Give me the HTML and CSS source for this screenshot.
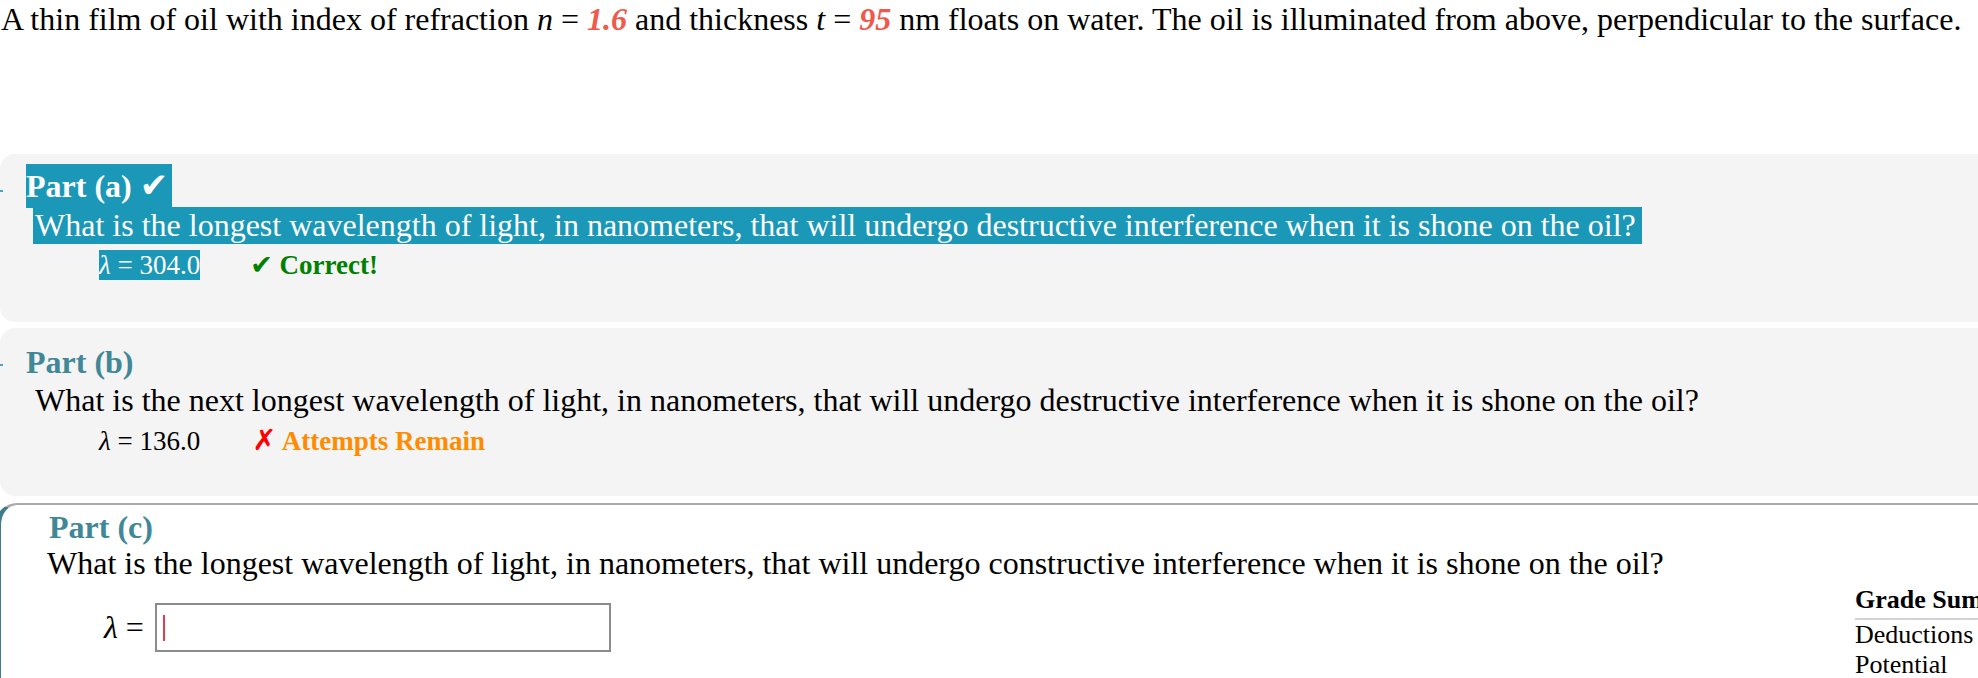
FILE: index.html
```html
<!DOCTYPE html>
<html lang="en">
<head>
<meta charset="utf-8">
<title>Thin film interference</title>
<link rel="stylesheet" href="styles.css">
</head>
<body>
<p class="intro">A thin film of oil with index of refraction <i class="var">n</i> = <i class="given">1.6</i> and thickness <i class="var">t</i> = <i class="given">95</i> nm floats on water. The oil is illuminated from above, perpendicular to the surface.</p>
<div class="parts">
  <section class="part part-done">
    <div class="part-title"><span class="sel sel-title">Part (a) <span class="check check-big">✔</span></span></div>
    <div class="question"><span class="sel sel-q">What is the longest wavelength of light, in nanometers, that will undergo destructive interference when it is shone on the oil?</span></div>
    <div class="answer"><span class="sel sel-ans"><i class="lambda">λ</i> = 304.0</span><span class="status status-ok"><span class="check">✔</span> Correct!</span></div>
  </section>
  <section class="part part-pending">
    <div class="part-title">Part (b)</div>
    <div class="question">What is the next longest wavelength of light, in nanometers, that will undergo destructive interference when it is shone on the oil?</div>
    <div class="answer"><span class="ans"><i class="lambda">λ</i> = 136.0</span><span class="status status-miss"><span class="cross">✗</span> Attempts Remain</span></div>
  </section>
  <section class="part part-active">
    <div class="part-title">Part (c)</div>
    <div class="question">What is the longest wavelength of light, in nanometers, that will undergo constructive interference when it is shone on the oil?</div>
    <div class="work-row">
      <div class="entry">
        <span class="entry-label"><i class="lambda">λ</i> =</span>
        <div class="entry-box" role="textbox" aria-label="lambda"><span class="caret"></span></div>
      </div>
      <aside class="grade">
        <div class="grade-head">Grade Summary</div>
        <div class="grade-line">Deductions</div>
        <div class="grade-line">Potential</div>
      </aside>
    </div>
  </section>
</div>
</body>
</html>
```
FILE: styles.css
```css
html, body {
  margin: 0;
  overflow: hidden;
}

body {
  width: 2105px;
  font-family: "Liberation Serif", "Times New Roman", serif;
  color: #000;
  background: #fff;
}

.intro {
  margin: 0 0 116px 1px;
  font-size: 32px;
  line-height: 38px;
  white-space: nowrap;
}

.var {
  font-style: italic;
}

.given {
  font-style: italic;
  font-weight: bold;
  color: #f0594a;
}

.parts {
  display: flex;
  flex-direction: column;
}

.part {
  position: relative;
  box-sizing: border-box;
  height: 168px;
  padding-top: 10px;
  background: #f4f4f4;
  border-radius: 15px 0 0 15px;
}

.part-done {
  margin-bottom: 6px;
}

.part-pending {
  margin-bottom: 7px;
}

.part-done::before,
.part-pending::before {
  content: "";
  position: absolute;
  left: 0;
  top: 36px;
  width: 3px;
  height: 2px;
  background: #4aa3c9;
}

.part-title {
  font-size: 32px;
  font-weight: bold;
  line-height: 43px;
  height: 43px;
  padding-left: 26px;
  color: #408797;
  white-space: nowrap;
}

.sel {
  display: inline-block;
  background: #1b97b8;
  color: #fff;
}

.sel-title {
  padding-right: 4px;
}

.check {
  font-family: "DejaVu Sans", sans-serif;
  font-weight: bold;
}

.check-big {
  font-size: 34px;
}

.cross {
  font-family: "DejaVu Sans", sans-serif;
  font-weight: bold;
  font-size: 29px;
  color: #f00;
}

.question {
  font-size: 32px;
  line-height: 37px;
  padding-left: 35px;
  white-space: nowrap;
}

.sel-q {
  margin-left: -2px;
  padding-left: 2px;
  padding-right: 6px;
}

.part-pending .part-title {
  margin-top: 3px;
}

.part-pending .question {
  margin-top: -2px;
}

.answer {
  display: flex;
  align-items: baseline;
  margin-top: 6px;
  padding-left: 99px;
  font-size: 27px;
  line-height: 30px;
  height: 30px;
  white-space: nowrap;
}

.lambda {
  font-style: italic;
}

.status {
  margin-left: 50px;
  font-weight: bold;
}

.status-ok {
  color: #008000;
}

.status-miss {
  margin-left: 52px;
  color: #ff8c00;
}

.part-active {
  height: auto;
  min-height: 200px;
  margin-left: -5px;
  padding-top: 4px;
  background: #fff;
  border-top: 2px solid #aaaaaa;
  border-left: 6px solid #3d7d89;
  border-radius: 22px 0 0 0;
}

.part-active .part-title {
  height: 37px;
  line-height: 37px;
  padding-left: 48px;
}

.part-active .question {
  line-height: 34px;
  padding-left: 46px;
}

.work-row {
  display: flex;
  align-items: flex-start;
}

.entry {
  display: flex;
  align-items: center;
  margin-top: 23px;
  padding-left: 103px;
}

.entry-label {
  font-size: 32px;
  line-height: 37px;
  margin-right: 11px;
  white-space: nowrap;
}

.entry-box {
  display: flex;
  align-items: center;
  box-sizing: border-box;
  width: 456px;
  height: 49px;
  padding-left: 6px;
  border: 2px solid #8c8c8c;
  background: #fff;
}

.caret {
  width: 2px;
  height: 26px;
  background: #e8394f;
}

.grade {
  margin-left: auto;
  width: 250px;
  margin-top: 5px;
  font-size: 26px;
  white-space: nowrap;
}

.grade-head {
  font-weight: bold;
  line-height: 30px;
  padding-bottom: 3px;
  border-bottom: 2px solid #d3d3d3;
}

.grade-line {
  line-height: 30px;
}
```
